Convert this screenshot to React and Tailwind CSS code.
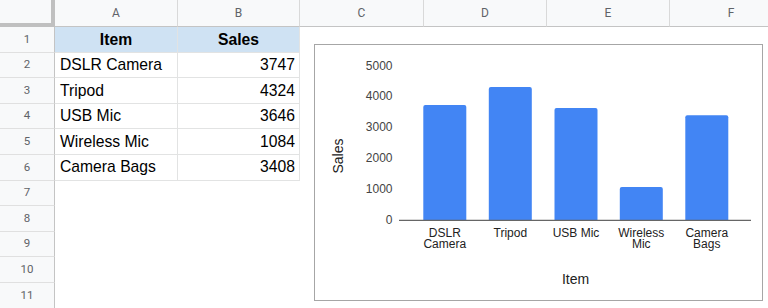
import React from "react";

const cols = ["A", "B", "C", "D", "E", "F"];
const colW = [123, 122, 124, 123, 123, 123];
const data = [
  ["DSLR Camera", 3747],
  ["Tripod", 4324],
  ["USB Mic", 3646],
  ["Wireless Mic", 1084],
  ["Camera Bags", 3408],
];

function Chart() {
  const base = 175.3;
  const k = 30.8 / 1000;
  const xs = [108.3, 173.8, 239.5, 304.8, 370.3];
  const labels = [["DSLR", "Camera"], ["Tripod"], ["USB Mic"], ["Wireless", "Mic"], ["Camera", "Bags"]];
  return (
    <svg width="446" height="254" viewBox="0 0 446 254" className="block" style={{ fontFamily: '"Liberation Sans", Arial, sans-serif' }}>
      {[0, 1000, 2000, 3000, 4000, 5000].map((v) => (
        <text key={v} x="77.5" y={base - v * k + 3.3} textAnchor="end" fontSize="12" fill="#444">
          {v}
        </text>
      ))}
      {data.map(([n, v], i) => {
        const h = v * k;
        const x = xs[i];
        const y = base - h;
        const w = 43;
        const r = 2;
        return (
          <path
            key={n}
            d={`M${x} ${base} L${x} ${y + r} Q${x} ${y} ${x + r} ${y} L${x + w - r} ${y} Q${x + w} ${y} ${x + w} ${y + r} L${x + w} ${base} Z`}
            fill="#4285f4"
          />
        );
      })}
      <line x1="84" y1={base} x2="436" y2={base} stroke="#666" strokeWidth="1.3" />
      {labels.map((ls, i) =>
        ls.map((l, j) => (
          <text key={i + "-" + j} x={xs[i] + 21.5} y={191.5 + j * 11} textAnchor="middle" fontSize="12" fill="#222">
            {l}
          </text>
        ))
      )}
      <text x="260.5" y="238.5" textAnchor="middle" fontSize="14" fill="#222">
        Item
      </text>
      <text x="23" y="116" textAnchor="middle" fontSize="14" fill="#222" transform="rotate(-90 23 111)">
        Sales
      </text>
    </svg>
  );
}

export default function App() {
  const rows = Array.from({ length: 11 }, (_, i) => i + 1);
  return (
    <div className="relative w-[768px] h-[308px] overflow-hidden bg-white" style={{ fontFamily: '"Liberation Sans", Arial, sans-serif' }}>
      {/* column header */}
      <div className="flex h-[27px] bg-[#f8f9fa] font-['Roboto',sans-serif] text-[12px] text-[#5f6368]">
        <div className="w-[55px] shrink-0 box-border border-r-[4px] border-b-[4px] border-[#c0c0c0]" />
        {cols.map((c, i) => (
          <div
            key={c}
            className="shrink-0 box-border flex items-center justify-center border-r border-b border-r-[#d9d9d9] border-b-[#c4c4c4] pb-[1px]"
            style={{ width: colW[i] }}
          >
            {c}
          </div>
        ))}
        <div className="flex-1 border-b border-[#c4c4c4]" />
      </div>
      {/* rows */}
      {rows.map((r) => (
        <div key={r} className="flex h-[25.6px]">
          <div className="w-[55px] shrink-0 box-border flex items-center justify-center bg-[#f8f9fa] border-r border-b border-r-[#c4c4c4] border-b-[#e0e0e0] font-['Roboto',sans-serif] text-[11.5px] text-[#5f6368]">
            {r}
          </div>
          {r === 1 && (
            <>
              <div className="w-[123px] shrink-0 box-border flex items-center justify-center bg-[#cfe2f3] border-r border-b border-[#e2e3e3] font-bold text-[15.7px] text-black">
                Item
              </div>
              <div className="w-[122px] shrink-0 box-border flex items-center justify-center bg-[#cfe2f3] border-r border-b border-[#e2e3e3] font-bold text-[15.7px] text-black">
                Sales
              </div>
            </>
          )}
          {r >= 2 && r <= 6 && (
            <>
              <div className="w-[123px] shrink-0 box-border flex items-center pl-[5px] border-r border-b border-[#e2e3e3] text-[15.7px] text-black">
                {data[r - 2][0]}
              </div>
              <div className="w-[122px] shrink-0 box-border flex items-center justify-end pr-[4px] border-r border-b border-[#e2e3e3] text-[15.7px] text-black">
                {data[r - 2][1]}
              </div>
            </>
          )}
        </div>
      ))}
      {/* chart overlay */}
      <div className="absolute left-[314px] top-[44px] w-[449px] h-[257px] box-border border border-[#a6a6a6] bg-white">
        <Chart />
      </div>
    </div>
  );
}
